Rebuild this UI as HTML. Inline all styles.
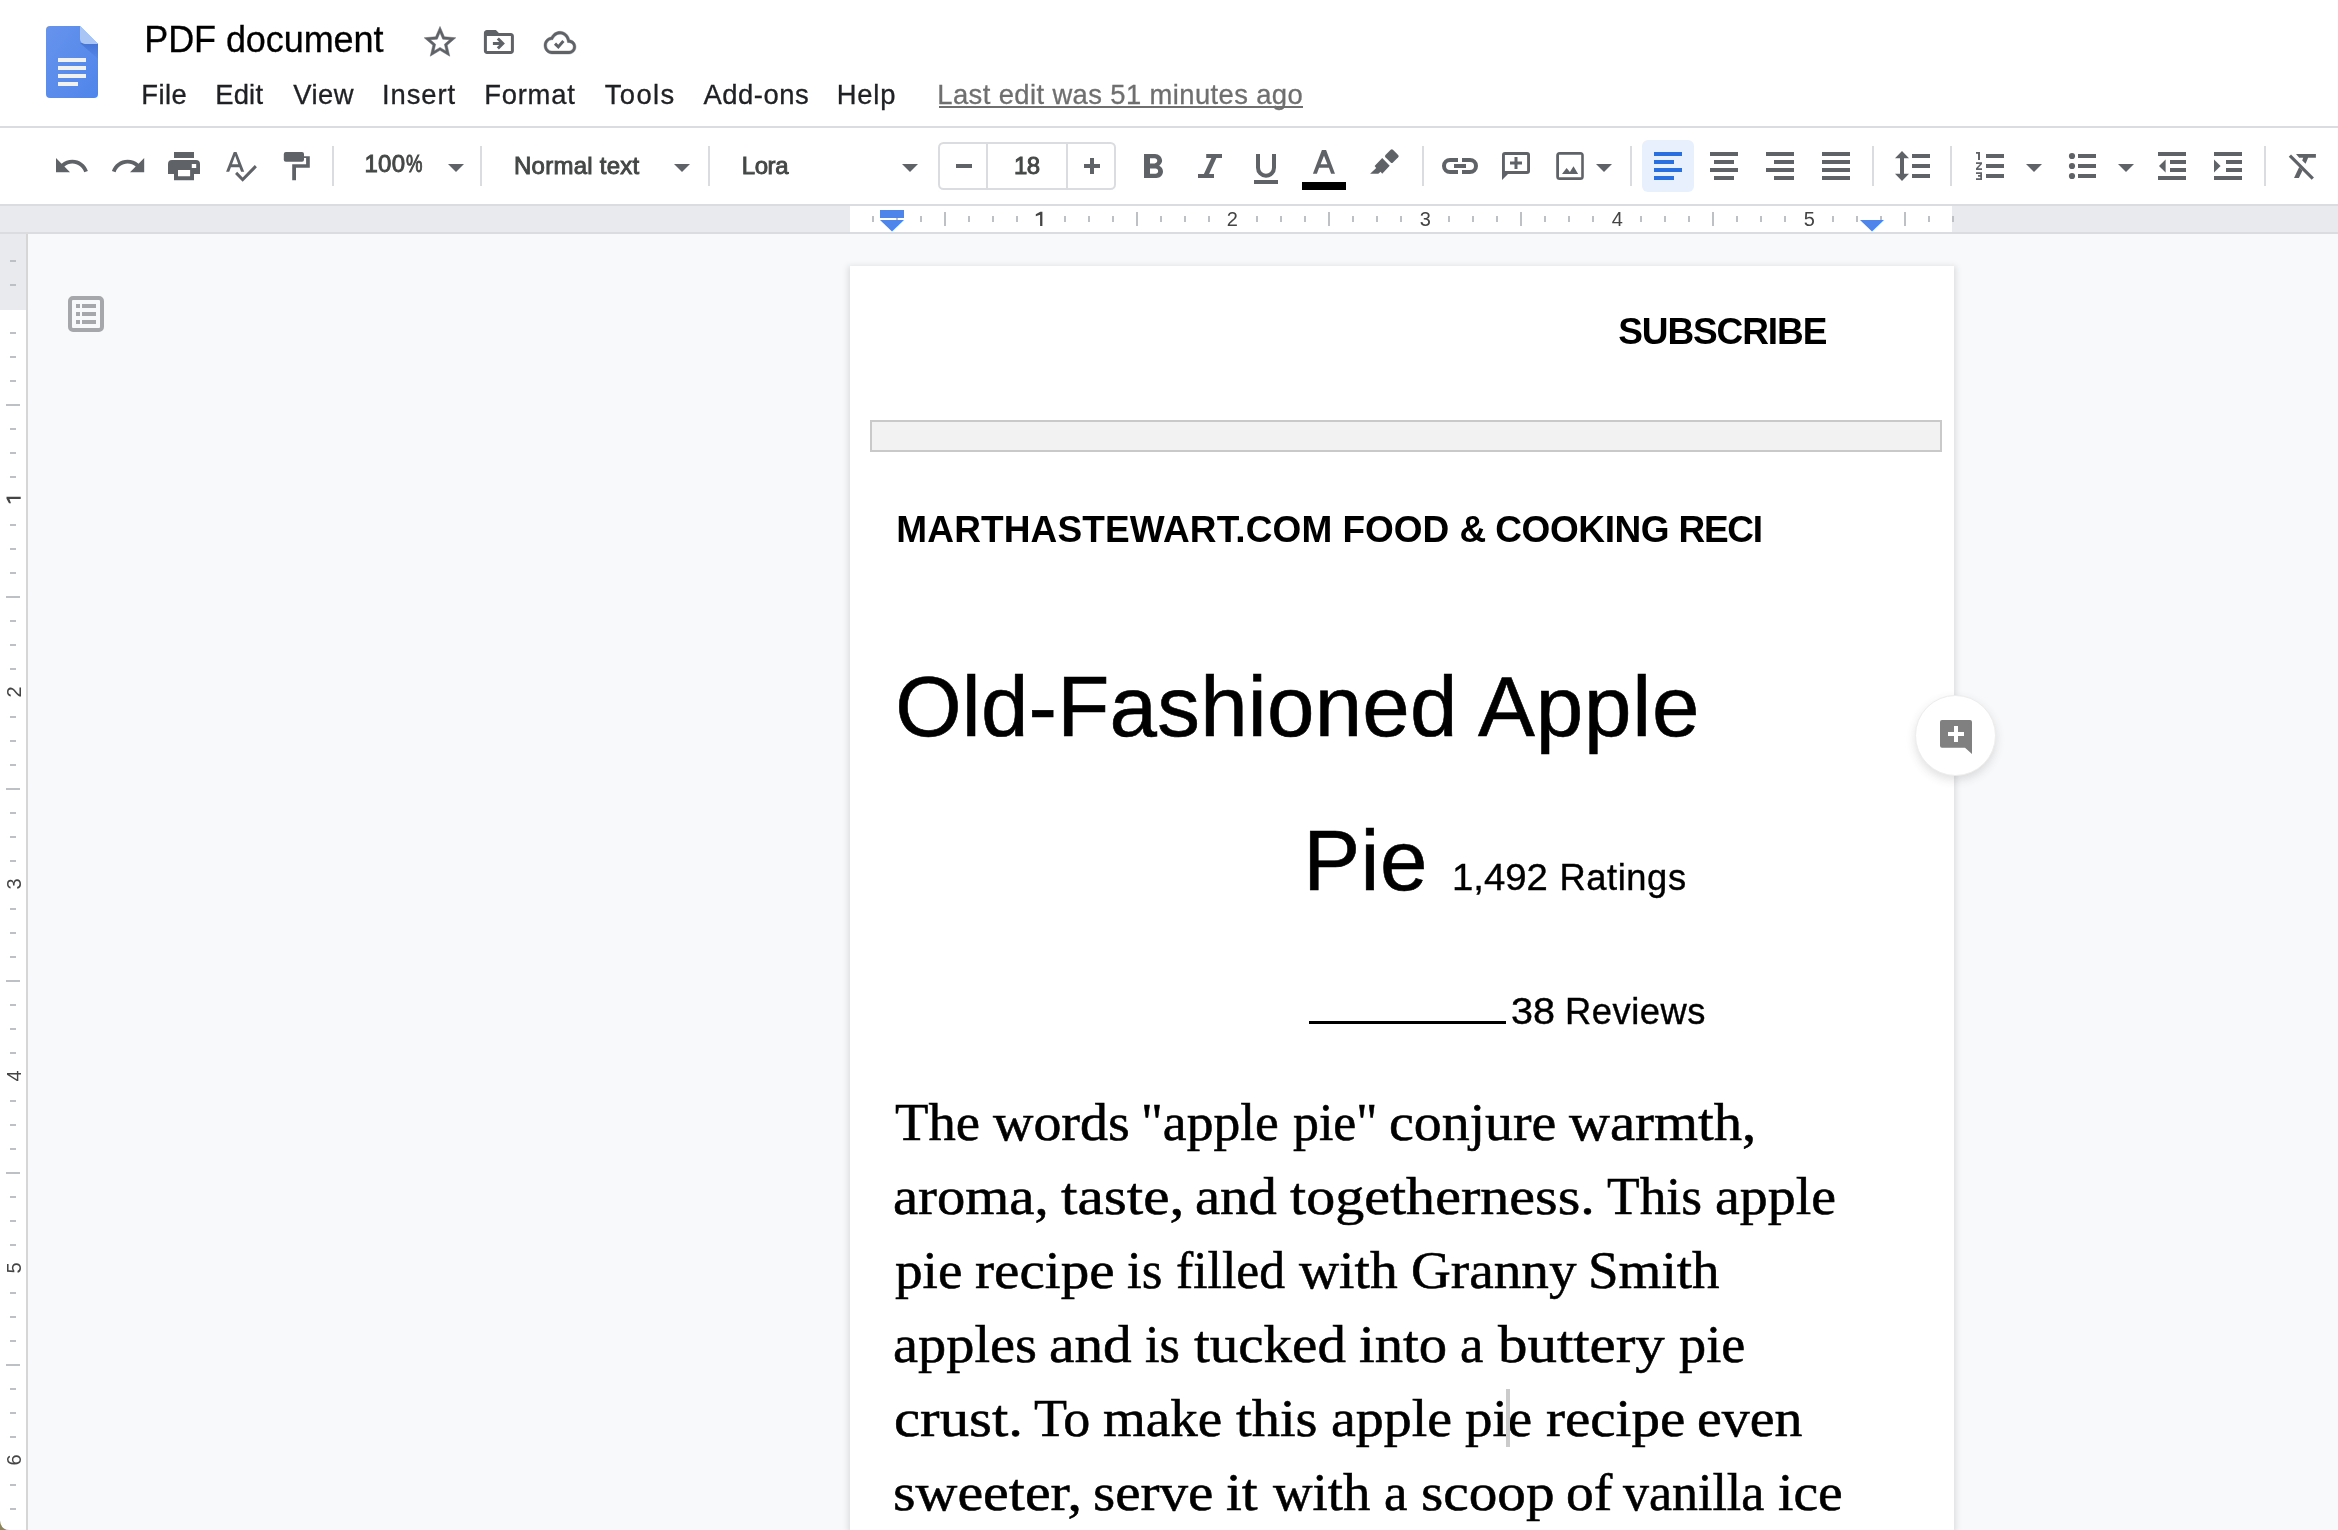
<!DOCTYPE html>
<html lang="en"><head><meta charset="utf-8"><title>PDF document - Google Docs</title>
<style>
html,body{margin:0;padding:0;width:2338px;height:1530px;overflow:hidden}
body{width:2338px;height:1530px;overflow:hidden;position:relative;background:#f8f9fa;font-family:"Liberation Sans",sans-serif}
.a{position:absolute}
.t{position:absolute;white-space:pre;line-height:1}
.vr{font:400 20px/1 "Liberation Sans",sans-serif;color:#444;transform:translate(-50%,-50%) rotate(-90deg)}
#titlebar{left:0;top:0;width:2338px;height:126px;background:#fff;border-bottom:2px solid #dadce0}
#toolbar{left:0;top:128px;width:2338px;height:76px;background:#fff;border-bottom:2px solid #dadce0}
#hruler{left:0;top:206px;width:2338px;height:26px;background:#e8eaed;border-bottom:2px solid #dadce0}
#hruler i{position:absolute;left:850px;top:0;width:1102px;height:26px;background:#fff}
#vruler{left:0;top:234px;width:26px;height:1296px;background:#fff;border-right:2px solid #d6d6d6}
#vruler i{position:absolute;left:0;top:0;width:26px;height:76px;background:#e8eaed}
#page{left:850px;top:266px;width:1104px;height:1264px;background:#fff;box-shadow:0 2px 6px 2px rgba(60,64,67,.15)}
#hr{left:870px;top:420px;width:1068px;height:28px;background:#f2f2f2;border:2px solid #c9c9c9}
#ul{left:1309px;top:1020.5px;width:197px;height:3px;background:#000}
#cur{left:1506px;top:1389px;width:4px;height:58px;background:#cbcbcb}
#le{left:939px;top:106px;width:363.5px;height:2px;background:#6f6f6f}
#fab{left:1915.3px;top:695px;width:81px;height:81px;box-sizing:border-box;border-radius:50%;background:#fff;border:1.5px solid #ededed;box-shadow:0 4px 10px rgba(60,64,67,.16)}
svg{position:absolute;left:0;top:0}
#txt{position:absolute;left:0;top:0;width:2338px;height:1530px;will-change:transform}
</style></head>
<body>
<div class="a" id="titlebar"></div>
<div class="a" id="toolbar"></div>
<div class="a" id="hruler"><i></i></div>
<div class="a" id="vruler"><i></i></div>
<div class="a" id="page"></div>
<div class="a" id="hr"></div>
<div class="a" id="ul"></div>
<div class="a" id="le"></div>
<div class="a" id="fab"></div>
<div id="txt">
<span class="t" style="left:144.20px;top:21.80px;font:normal 400 36px/1 'Liberation Sans';color:#000;letter-spacing:-0.073px;-webkit-text-stroke:.3px #000;">PDF document</span>
<span class="t" style="left:141.30px;top:80.90px;font:normal 400 27.4px/1 'Liberation Sans';color:#202124;letter-spacing:0.433px;-webkit-text-stroke:.3px #202124;">File</span>
<span class="t" style="left:215.20px;top:80.90px;font:normal 400 27.4px/1 'Liberation Sans';color:#202124;letter-spacing:0.204px;-webkit-text-stroke:.3px #202124;">Edit</span>
<span class="t" style="left:293.20px;top:80.90px;font:normal 400 27.4px/1 'Liberation Sans';color:#202124;letter-spacing:0.502px;-webkit-text-stroke:.3px #202124;">View</span>
<span class="t" style="left:382.00px;top:80.90px;font:normal 400 27.4px/1 'Liberation Sans';color:#202124;letter-spacing:0.901px;-webkit-text-stroke:.3px #202124;">Insert</span>
<span class="t" style="left:484.20px;top:80.90px;font:normal 400 27.4px/1 'Liberation Sans';color:#202124;letter-spacing:0.773px;-webkit-text-stroke:.3px #202124;">Format</span>
<span class="t" style="left:604.70px;top:80.90px;font:normal 400 27.4px/1 'Liberation Sans';color:#202124;letter-spacing:1.388px;-webkit-text-stroke:.3px #202124;">Tools</span>
<span class="t" style="left:703.50px;top:80.90px;font:normal 400 27.4px/1 'Liberation Sans';color:#202124;letter-spacing:0.529px;-webkit-text-stroke:.3px #202124;">Add-ons</span>
<span class="t" style="left:836.70px;top:80.90px;font:normal 400 27.4px/1 'Liberation Sans';color:#202124;letter-spacing:0.834px;-webkit-text-stroke:.3px #202124;">Help</span>
<span class="t" style="left:937.30px;top:80.90px;font:normal 400 27.4px/1 'Liberation Sans';color:#6f6f6f;letter-spacing:0.395px;-webkit-text-stroke:.3px #6f6f6f;">Last edit was 51 minutes ago</span>
<span class="t" style="left:364.40px;top:151.90px;font:normal 400 24px/1 'Liberation Sans';color:#444746;letter-spacing:0.302px;-webkit-text-stroke:.9px #444746;">100</span>
<span class="t" style="left:405.80px;top:151.90px;font:normal 400 24px/1 'Liberation Sans';color:#444746;transform:scaleX(0.7714);transform-origin:0 0;-webkit-text-stroke:.9px #444746;">%</span>
<span class="t" style="left:514.00px;top:154.00px;font:normal 400 24px/1 'Liberation Sans';color:#444746;letter-spacing:0.257px;-webkit-text-stroke:.9px #444746;">Normal text</span>
<span class="t" style="left:741.70px;top:154.00px;font:normal 400 24px/1 'Liberation Sans';color:#444746;letter-spacing:-0.396px;-webkit-text-stroke:.9px #444746;">Lora</span>
<span class="t" style="left:1013.90px;top:154.00px;font:normal 400 24px/1 'Liberation Sans';color:#444746;letter-spacing:-0.548px;-webkit-text-stroke:.9px #444746;">18</span>
<span class="t" style="left:1226.80px;top:209.00px;font:normal 400 20px/1 'Liberation Sans';color:#444;">2</span>
<span class="t" style="left:1419.80px;top:209.00px;font:normal 400 20px/1 'Liberation Sans';color:#444;">3</span>
<span class="t" style="left:1611.80px;top:209.00px;font:normal 400 20px/1 'Liberation Sans';color:#444;">4</span>
<span class="t" style="left:1803.80px;top:209.00px;font:normal 400 20px/1 'Liberation Sans';color:#444;">5</span>
<span class="t" style="left:1618.20px;top:313.00px;font:normal 700 37px/1 'Liberation Sans';color:#000;letter-spacing:-1.092px;">SUBSCRIBE</span>
<span class="t" style="left:896.30px;top:511.00px;font:normal 700 37px/1 'Liberation Sans';color:#000;letter-spacing:0.146px;">MARTHASTEWART.COM</span>
<span class="t" style="left:1342.40px;top:511.00px;font:normal 700 37px/1 'Liberation Sans';color:#000;letter-spacing:0.013px;">FOOD</span>
<span class="t" style="left:1459.40px;top:511.00px;font:normal 700 37px/1 'Liberation Sans';color:#000;">&amp;</span>
<span class="t" style="left:1495.30px;top:511.00px;font:normal 700 37px/1 'Liberation Sans';color:#000;letter-spacing:-0.417px;">COOKING</span>
<span class="t" style="left:1678.60px;top:511.00px;font:normal 700 37px/1 'Liberation Sans';color:#000;letter-spacing:-1.340px;">RECI</span>
<span class="t" style="left:895.20px;top:663.60px;font:normal 400 85.33px/1 'Liberation Sans';color:#000;letter-spacing:0.215px;-webkit-text-stroke:.6px #000;">Old-Fashioned</span>
<span class="t" style="left:1478.00px;top:663.60px;font:normal 400 85.33px/1 'Liberation Sans';color:#000;letter-spacing:0.805px;-webkit-text-stroke:.6px #000;">Apple</span>
<span class="t" style="left:1303.20px;top:817.90px;font:normal 400 85.33px/1 'Liberation Sans';color:#000;letter-spacing:0.515px;-webkit-text-stroke:.6px #000;">Pie</span>
<span class="t" style="left:1452.49px;top:859.90px;font:normal 400 36.3px/1 'Liberation Sans';color:#000;transform:scaleX(1.0543);transform-origin:0 0;-webkit-text-stroke:.4px #000;">1,492</span>
<span class="t" style="left:1559.40px;top:859.90px;font:normal 400 36.3px/1 'Liberation Sans';color:#000;letter-spacing:0.597px;-webkit-text-stroke:.4px #000;">Ratings</span>
<span class="t" style="left:1510.61px;top:993.50px;font:normal 400 36.3px/1 'Liberation Sans';color:#000;transform:scaleX(1.0894);transform-origin:0 0;-webkit-text-stroke:.4px #000;">38</span>
<span class="t" style="left:1565.10px;top:993.50px;font:normal 400 36.3px/1 'Liberation Sans';color:#000;letter-spacing:0.515px;-webkit-text-stroke:.4px #000;">Reviews</span>
<span class="t" style="left:894.50px;top:1097.00px;font:normal 400 52px/1 'Liberation Serif';color:#000;transform:scaleX(1.0519);transform-origin:0 0;-webkit-text-stroke:.55px #000;">The</span>
<span class="t" style="left:992.70px;top:1097.00px;font:normal 400 52px/1 'Liberation Serif';color:#000;transform:scaleX(1.0757);transform-origin:0 0;-webkit-text-stroke:.55px #000;">words</span>
<span class="t" style="left:1141.01px;top:1097.00px;font:normal 400 52px/1 'Liberation Serif';color:#000;transform:scaleX(1.0304);transform-origin:0 0;-webkit-text-stroke:.55px #000;">&quot;apple</span>
<span class="t" style="left:1292.70px;top:1097.00px;font:normal 400 52px/1 'Liberation Serif';color:#000;transform:scaleX(0.9972);transform-origin:0 0;-webkit-text-stroke:.55px #000;">pie&quot;</span>
<span class="t" style="left:1388.83px;top:1097.00px;font:normal 400 52px/1 'Liberation Serif';color:#000;transform:scaleX(1.0732);transform-origin:0 0;-webkit-text-stroke:.55px #000;">conjure</span>
<span class="t" style="left:1569.20px;top:1097.00px;font:normal 400 52px/1 'Liberation Serif';color:#000;transform:scaleX(1.0892);transform-origin:0 0;-webkit-text-stroke:.55px #000;">warmth,</span>
<span class="t" style="left:893.41px;top:1171.00px;font:normal 400 52px/1 'Liberation Serif';color:#000;transform:scaleX(1.0884);transform-origin:0 0;-webkit-text-stroke:.55px #000;">aroma,</span>
<span class="t" style="left:1060.70px;top:1171.00px;font:normal 400 52px/1 'Liberation Serif';color:#000;transform:scaleX(1.1378);transform-origin:0 0;-webkit-text-stroke:.55px #000;">taste,</span>
<span class="t" style="left:1195.01px;top:1171.00px;font:normal 400 52px/1 'Liberation Serif';color:#000;transform:scaleX(1.0880);transform-origin:0 0;-webkit-text-stroke:.55px #000;">and</span>
<span class="t" style="left:1290.20px;top:1171.00px;font:normal 400 52px/1 'Liberation Serif';color:#000;transform:scaleX(1.1166);transform-origin:0 0;-webkit-text-stroke:.55px #000;">togetherness.</span>
<span class="t" style="left:1607.00px;top:1171.00px;font:normal 400 52px/1 'Liberation Serif';color:#000;transform:scaleX(1.0273);transform-origin:0 0;-webkit-text-stroke:.55px #000;">This</span>
<span class="t" style="left:1714.53px;top:1171.00px;font:normal 400 52px/1 'Liberation Serif';color:#000;transform:scaleX(1.0739);transform-origin:0 0;-webkit-text-stroke:.55px #000;">apple</span>
<span class="t" style="left:894.50px;top:1245.00px;font:normal 400 52px/1 'Liberation Serif';color:#000;transform:scaleX(1.0617);transform-origin:0 0;-webkit-text-stroke:.55px #000;">pie</span>
<span class="t" style="left:974.70px;top:1245.00px;font:normal 400 52px/1 'Liberation Serif';color:#000;transform:scaleX(1.0991);transform-origin:0 0;-webkit-text-stroke:.55px #000;">recipe</span>
<span class="t" style="left:1127.08px;top:1245.00px;font:normal 400 52px/1 'Liberation Serif';color:#000;transform:scaleX(1.0201);transform-origin:0 0;-webkit-text-stroke:.55px #000;">is</span>
<span class="t" style="left:1175.81px;top:1245.00px;font:normal 400 52px/1 'Liberation Serif';color:#000;transform:scaleX(0.9932);transform-origin:0 0;-webkit-text-stroke:.55px #000;">filled</span>
<span class="t" style="left:1298.70px;top:1245.00px;font:normal 400 52px/1 'Liberation Serif';color:#000;transform:scaleX(1.0676);transform-origin:0 0;-webkit-text-stroke:.55px #000;">with</span>
<span class="t" style="left:1410.88px;top:1245.00px;font:normal 400 52px/1 'Liberation Serif';color:#000;transform:scaleX(1.0614);transform-origin:0 0;-webkit-text-stroke:.55px #000;">Granny</span>
<span class="t" style="left:1587.83px;top:1245.00px;font:normal 400 52px/1 'Liberation Serif';color:#000;transform:scaleX(1.0580);transform-origin:0 0;-webkit-text-stroke:.55px #000;">Smith</span>
<span class="t" style="left:893.42px;top:1319.00px;font:normal 400 52px/1 'Liberation Serif';color:#000;transform:scaleX(1.0842);transform-origin:0 0;-webkit-text-stroke:.55px #000;">apples</span>
<span class="t" style="left:1049.30px;top:1319.00px;font:normal 400 52px/1 'Liberation Serif';color:#000;transform:scaleX(1.1002);transform-origin:0 0;-webkit-text-stroke:.55px #000;">and</span>
<span class="t" style="left:1145.29px;top:1319.00px;font:normal 400 52px/1 'Liberation Serif';color:#000;transform:scaleX(1.0078);transform-origin:0 0;-webkit-text-stroke:.55px #000;">is</span>
<span class="t" style="left:1193.90px;top:1319.00px;font:normal 400 52px/1 'Liberation Serif';color:#000;transform:scaleX(1.0959);transform-origin:0 0;-webkit-text-stroke:.55px #000;">tucked</span>
<span class="t" style="left:1359.41px;top:1319.00px;font:normal 400 52px/1 'Liberation Serif';color:#000;transform:scaleX(1.0901);transform-origin:0 0;-webkit-text-stroke:.55px #000;">into</span>
<span class="t" style="left:1460.49px;top:1319.00px;font:normal 400 52px/1 'Liberation Serif';color:#000;transform:scaleX(1.0091);transform-origin:0 0;-webkit-text-stroke:.55px #000;">a</span>
<span class="t" style="left:1498.30px;top:1319.00px;font:normal 400 52px/1 'Liberation Serif';color:#000;transform:scaleX(1.1325);transform-origin:0 0;-webkit-text-stroke:.55px #000;">buttery</span>
<span class="t" style="left:1679.00px;top:1319.00px;font:normal 400 52px/1 'Liberation Serif';color:#000;transform:scaleX(1.0441);transform-origin:0 0;-webkit-text-stroke:.55px #000;">pie</span>
<span class="t" style="left:893.87px;top:1393.00px;font:normal 400 52px/1 'Liberation Serif';color:#000;transform:scaleX(1.1301);transform-origin:0 0;-webkit-text-stroke:.55px #000;">crust.</span>
<span class="t" style="left:1034.40px;top:1393.00px;font:normal 400 52px/1 'Liberation Serif';color:#000;transform:scaleX(1.0389);transform-origin:0 0;-webkit-text-stroke:.55px #000;">To</span>
<span class="t" style="left:1103.04px;top:1393.00px;font:normal 400 52px/1 'Liberation Serif';color:#000;transform:scaleX(1.0586);transform-origin:0 0;-webkit-text-stroke:.55px #000;">make</span>
<span class="t" style="left:1236.10px;top:1393.00px;font:normal 400 52px/1 'Liberation Serif';color:#000;transform:scaleX(1.0853);transform-origin:0 0;-webkit-text-stroke:.55px #000;">this</span>
<span class="t" style="left:1330.73px;top:1393.00px;font:normal 400 52px/1 'Liberation Serif';color:#000;transform:scaleX(1.0739);transform-origin:0 0;-webkit-text-stroke:.55px #000;">apple</span>
<span class="t" style="left:1465.40px;top:1393.00px;font:normal 400 52px/1 'Liberation Serif';color:#000;transform:scaleX(1.0553);transform-origin:0 0;-webkit-text-stroke:.55px #000;">pie</span>
<span class="t" style="left:1545.60px;top:1393.00px;font:normal 400 52px/1 'Liberation Serif';color:#000;transform:scaleX(1.0959);transform-origin:0 0;-webkit-text-stroke:.55px #000;">recipe</span>
<span class="t" style="left:1696.85px;top:1393.00px;font:normal 400 52px/1 'Liberation Serif';color:#000;transform:scaleX(1.0732);transform-origin:0 0;-webkit-text-stroke:.55px #000;">even</span>
<span class="t" style="left:893.17px;top:1467.00px;font:normal 400 52px/1 'Liberation Serif';color:#000;transform:scaleX(1.1141);transform-origin:0 0;-webkit-text-stroke:.55px #000;">sweeter,</span>
<span class="t" style="left:1092.71px;top:1467.00px;font:normal 400 52px/1 'Liberation Serif';color:#000;transform:scaleX(1.0972);transform-origin:0 0;-webkit-text-stroke:.55px #000;">serve</span>
<span class="t" style="left:1225.80px;top:1467.00px;font:normal 400 52px/1 'Liberation Serif';color:#000;transform:scaleX(1.0968);transform-origin:0 0;-webkit-text-stroke:.55px #000;">it</span>
<span class="t" style="left:1273.10px;top:1467.00px;font:normal 400 52px/1 'Liberation Serif';color:#000;transform:scaleX(1.0525);transform-origin:0 0;-webkit-text-stroke:.55px #000;">with</span>
<span class="t" style="left:1384.19px;top:1467.00px;font:normal 400 52px/1 'Liberation Serif';color:#000;transform:scaleX(1.0136);transform-origin:0 0;-webkit-text-stroke:.55px #000;">a</span>
<span class="t" style="left:1420.50px;top:1467.00px;font:normal 400 52px/1 'Liberation Serif';color:#000;transform:scaleX(1.1004);transform-origin:0 0;-webkit-text-stroke:.55px #000;">scoop</span>
<span class="t" style="left:1565.93px;top:1467.00px;font:normal 400 52px/1 'Liberation Serif';color:#000;transform:scaleX(1.0698);transform-origin:0 0;-webkit-text-stroke:.55px #000;">of</span>
<span class="t" style="left:1622.60px;top:1467.00px;font:normal 400 52px/1 'Liberation Serif';color:#000;transform:scaleX(0.9984);transform-origin:0 0;-webkit-text-stroke:.55px #000;">vanilla</span>
<span class="t" style="left:1777.63px;top:1467.00px;font:normal 400 52px/1 'Liberation Serif';color:#000;transform:scaleX(1.0679);transform-origin:0 0;-webkit-text-stroke:.55px #000;">ice</span>
<span class="t vr" style="left:14px;top:692.0px;">2</span>
<span class="t vr" style="left:14px;top:884.0px;">3</span>
<span class="t vr" style="left:14px;top:1076.0px;">4</span>
<span class="t vr" style="left:14px;top:1268.0px;">5</span>
<span class="t vr" style="left:14px;top:1460.0px;">6</span>
</div>
<div class="a" id="cur"></div>
<svg width="2338" height="1530" viewBox="0 0 2338 1530">
<defs><linearGradient id="dg" x1="0" y1="0" x2="1" y2="1"><stop offset="0" stop-color="#6693ed"/><stop offset="1" stop-color="#4f85ea"/></linearGradient><linearGradient id="fs" x1="0" y1="0" x2="0" y2="1"><stop offset="0" stop-color="#3c6acb" stop-opacity=".7"/><stop offset="1" stop-color="#3c6acb" stop-opacity=".05"/></linearGradient></defs><path d="M50 26H80L98 44V94a4 4 0 0 1-4 4H50a4 4 0 0 1-4-4V30a4 4 0 0 1 4-4z" fill="url(#dg)" /><path d="M80 43L98 43.500V59z" fill="url(#fs)" /><path d="M80 26L98 44H85a5 5 0 0 1-5-5z" fill="#a9c5f6" /><rect x="58" y="58" width="28" height="4" fill="#f1f1f1" /><rect x="58" y="66" width="28" height="4" fill="#f1f1f1" /><rect x="58" y="74" width="28" height="4" fill="#f1f1f1" /><rect x="58" y="82" width="20" height="4" fill="#f1f1f1" /><polyline points="555,43.600 558.300,46.900 563.400,41" fill="none" stroke="#5f6368" stroke-width="3"/><rect x="174" y="152" width="20" height="6" fill="#5f6368" /><path d="M172 160h24a4 4 0 0 1 4 4v10h-6v-4.5h-20v4.5h-6v-10a4 4 0 0 1 4-4zM191.8 163.9v4.2h4.4v-4.2z" fill="#5f6368" fill-rule="evenodd"/><path d="M174 168h20v12.2h-20zM178 170v6.3h12.1v-6.3z" fill="#5f6368" fill-rule="evenodd"/><rect x="283.8" y="151.9" width="20.2" height="9.8" fill="#5f6368" rx="2" /><path d="M304 156.2h5.800v11.500h-13.800v12.500h-3.800v-15.900h13.900v-6.400h-2.100z" fill="#5f6368" /><rect x="332" y="146" width="2" height="40" fill="#dadce0" /><rect x="480" y="146" width="2" height="40" fill="#dadce0" /><rect x="708" y="146" width="2" height="40" fill="#dadce0" /><rect x="1422" y="146" width="2" height="40" fill="#dadce0" /><rect x="1630" y="146" width="2" height="40" fill="#dadce0" /><rect x="1872" y="146" width="2" height="40" fill="#dadce0" /><rect x="1950" y="146" width="2" height="40" fill="#dadce0" /><rect x="2264" y="146" width="2" height="40" fill="#dadce0" /><polygon points="448,164 464,164 456.0,172" fill="#5f6368"/><polygon points="674,164 690,164 682.0,172" fill="#5f6368"/><polygon points="902,164 918,164 910.0,172" fill="#5f6368"/><polygon points="1596,164 1612,164 1604.0,172" fill="#5f6368"/><polygon points="2026,164 2042,164 2034.0,172" fill="#5f6368"/><polygon points="2118,164 2134,164 2126.0,172" fill="#5f6368"/><rect x="939" y="143" width="176" height="46" rx="4.500" fill="none" stroke="#dadce0" stroke-width="2"/><rect x="986" y="144" width="2" height="44" fill="#dadce0" /><rect x="1066" y="144" width="2" height="44" fill="#dadce0" /><rect x="956" y="164" width="16" height="4" fill="#5f6368" /><rect x="1084" y="164" width="16" height="4" fill="#5f6368" /><rect x="1090" y="158" width="4" height="16" fill="#5f6368" /><path d="M1206.2 154H1222v4.100h-5.600L1209.100 174h4.900v4H1198v-4h5.900L1211.400 158.100h-5.200z" fill="#5f6368" /><path d="M1256 154h4v13.700a6 6 0 0 0 12 0V154h4v13.700a10 10 0 0 1-20 0z" fill="#5f6368" /><rect x="1254" y="180" width="24" height="4" fill="#5f6368" /><path d="M1321.900 150.100H1326.100L1335 173.800H1331.100L1328.900 167.800H1319.100L1316.900 173.800H1312.900ZM1324 155.700L1327.400 164.200H1320.600Z" fill="#5f6368" fill-rule="evenodd"/><rect x="1302" y="182" width="44" height="8" fill="#000" /><rect x="-5.3" y="-5.3" width="10.6" height="10.6" rx="1.6" fill="#5f6368" transform="translate(1391.8 156.1) rotate(45)"/><path d="M1382.2 158.100L1389.7 165.800L1382.2 173.800L1380.6 171.800L1378.3 173.800H1370.100L1376.2 167.900L1374.6 166.100z" fill="#5f6368" /><path d="M1458 160H1450a6 6 0 0 0 0 12H1458M1462 160H1470a6 6 0 0 1 0 12H1462" fill="none" stroke="#5f6368" stroke-width="4"/><rect x="1454" y="164" width="12" height="4" fill="#5f6368" /><path d="M1505 152h22a3 3 0 0 1 3 3v16a3 3 0 0 1-3 3h-19l-6 6v-25a3 3 0 0 1 3-3zM1504.900 154.900v16.200h22.200v-16.200z" fill="#5f6368" fill-rule="evenodd"/><rect x="1510" y="161.5" width="12" height="3" fill="#5f6368" /><rect x="1514.5" y="157" width="3" height="12" fill="#5f6368" /><path d="M1559.700 152h20.600a3.500 3.500 0 0 1 3.500 3.500v21a3.500 3.500 0 0 1-3.500 3.500h-20.600a3.500 3.500 0 0 1-3.500-3.500v-21a3.500 3.500 0 0 1 3.500-3.500zM1559 154.800v22.400h22.200v-22.400z" fill="#5f6368" fill-rule="evenodd"/><path d="M1562 174l4.600-6 3.300 4 3.600-5.800 4.600 7.800z" fill="#5f6368" /><rect x="1642" y="140" width="52" height="52" fill="#e8f0fe" rx="6" /><rect x="1654" y="152" width="28" height="4" fill="#2a6fe0" /><rect x="1654" y="160" width="20" height="4" fill="#2a6fe0" /><rect x="1654" y="168" width="28" height="4" fill="#2a6fe0" /><rect x="1654" y="176" width="20" height="4" fill="#2a6fe0" /><rect x="1710" y="152" width="28" height="4" fill="#5f6368" /><rect x="1714" y="160" width="20" height="4" fill="#5f6368" /><rect x="1710" y="168" width="28" height="4" fill="#5f6368" /><rect x="1714" y="176" width="20" height="4" fill="#5f6368" /><rect x="1766" y="152" width="28" height="4" fill="#5f6368" /><rect x="1774" y="160" width="20" height="4" fill="#5f6368" /><rect x="1766" y="168" width="28" height="4" fill="#5f6368" /><rect x="1774" y="176" width="20" height="4" fill="#5f6368" /><rect x="1822" y="152" width="28" height="4" fill="#5f6368" /><rect x="1822" y="160" width="28" height="4" fill="#5f6368" /><rect x="1822" y="168" width="28" height="4" fill="#5f6368" /><rect x="1822" y="176" width="28" height="4" fill="#5f6368" /><path d="M1902 151l7 7.200h-5v15.600h5l-7 7.200-7-7.200h5v-15.600h-5z" fill="#5f6368" /><rect x="1912" y="154" width="18" height="4" fill="#5f6368" /><rect x="1912" y="164" width="18" height="4" fill="#5f6368" /><rect x="1912" y="174" width="18" height="4" fill="#5f6368" /><rect x="1986" y="154" width="18" height="4" fill="#5f6368" /><rect x="1986" y="164" width="18" height="4" fill="#5f6368" /><rect x="1986" y="174" width="18" height="4" fill="#5f6368" /><rect x="1976" y="152" width="4" height="1.8" fill="#5f6368" /><rect x="1978" y="152" width="2" height="8" fill="#5f6368" /><path d="M1976 162.200h6v1.700l-4 4.400h4v1.700h-6v-1.700l4-4.400h-4z" fill="#5f6368" /><path d="M1976 172.200h6v7.700h-6v-1.700h4.300v-1.400h-2.300v-1.700h2.300v-1.200h-4.300z" fill="#5f6368" /><rect x="2078" y="154" width="18" height="4" fill="#5f6368" /><circle cx="2072" cy="156" r="3.1" fill="#5f6368"/><rect x="2078" y="164" width="18" height="4" fill="#5f6368" /><circle cx="2072" cy="166" r="3.1" fill="#5f6368"/><rect x="2078" y="174" width="18" height="4" fill="#5f6368" /><circle cx="2072" cy="176" r="3.1" fill="#5f6368"/><rect x="2158" y="152" width="28" height="4" fill="#5f6368" /><rect x="2158" y="176" width="28" height="4" fill="#5f6368" /><rect x="2170" y="160" width="16" height="4" fill="#5f6368" /><rect x="2170" y="168" width="16" height="4" fill="#5f6368" /><rect x="2214" y="152" width="28" height="4" fill="#5f6368" /><rect x="2214" y="176" width="28" height="4" fill="#5f6368" /><rect x="2226" y="160" width="16" height="4" fill="#5f6368" /><rect x="2226" y="168" width="16" height="4" fill="#5f6368" /><polygon points="2165.600,159.400 2165.600,172.600 2159,166" fill="#5f6368"/><polygon points="2214,159.400 2214,172.600 2220.600,166" fill="#5f6368"/><line x1="2289.900" y1="155.700" x2="2312.800" y2="178.700" stroke="#5f6368" stroke-width="3.200"/><path d="M2296 154h19.900v3.800h-7.800l-2.500 5.900-3.400-3.300 1-2.600h-4z" fill="#5f6368" /><path d="M2299.200 167.100l3.300 3.300-3.600 7.500h-4.900z" fill="#5f6368" /><rect x="872" y="216" width="2" height="6" fill="#bdc1c6" /><rect x="896" y="216" width="2" height="6" fill="#bdc1c6" /><rect x="920" y="216" width="2" height="6" fill="#bdc1c6" /><rect x="944" y="212" width="2" height="14" fill="#bdc1c6" /><rect x="968" y="216" width="2" height="6" fill="#bdc1c6" /><rect x="992" y="216" width="2" height="6" fill="#bdc1c6" /><rect x="1016" y="216" width="2" height="6" fill="#bdc1c6" /><rect x="1064" y="216" width="2" height="6" fill="#bdc1c6" /><rect x="1088" y="216" width="2" height="6" fill="#bdc1c6" /><rect x="1112" y="216" width="2" height="6" fill="#bdc1c6" /><rect x="1136" y="212" width="2" height="14" fill="#bdc1c6" /><rect x="1160" y="216" width="2" height="6" fill="#bdc1c6" /><rect x="1184" y="216" width="2" height="6" fill="#bdc1c6" /><rect x="1208" y="216" width="2" height="6" fill="#bdc1c6" /><rect x="1256" y="216" width="2" height="6" fill="#bdc1c6" /><rect x="1280" y="216" width="2" height="6" fill="#bdc1c6" /><rect x="1304" y="216" width="2" height="6" fill="#bdc1c6" /><rect x="1328" y="212" width="2" height="14" fill="#bdc1c6" /><rect x="1352" y="216" width="2" height="6" fill="#bdc1c6" /><rect x="1376" y="216" width="2" height="6" fill="#bdc1c6" /><rect x="1400" y="216" width="2" height="6" fill="#bdc1c6" /><rect x="1448" y="216" width="2" height="6" fill="#bdc1c6" /><rect x="1472" y="216" width="2" height="6" fill="#bdc1c6" /><rect x="1496" y="216" width="2" height="6" fill="#bdc1c6" /><rect x="1520" y="212" width="2" height="14" fill="#bdc1c6" /><rect x="1544" y="216" width="2" height="6" fill="#bdc1c6" /><rect x="1568" y="216" width="2" height="6" fill="#bdc1c6" /><rect x="1592" y="216" width="2" height="6" fill="#bdc1c6" /><rect x="1640" y="216" width="2" height="6" fill="#bdc1c6" /><rect x="1664" y="216" width="2" height="6" fill="#bdc1c6" /><rect x="1688" y="216" width="2" height="6" fill="#bdc1c6" /><rect x="1712" y="212" width="2" height="14" fill="#bdc1c6" /><rect x="1736" y="216" width="2" height="6" fill="#bdc1c6" /><rect x="1760" y="216" width="2" height="6" fill="#bdc1c6" /><rect x="1784" y="216" width="2" height="6" fill="#bdc1c6" /><rect x="1832" y="216" width="2" height="6" fill="#bdc1c6" /><rect x="1856" y="216" width="2" height="6" fill="#bdc1c6" /><rect x="1880" y="216" width="2" height="6" fill="#bdc1c6" /><rect x="1904" y="212" width="2" height="14" fill="#bdc1c6" /><rect x="1928" y="216" width="2" height="6" fill="#bdc1c6" /><rect x="1952" y="216" width="2" height="6" fill="#bdc1c6" /><path d="M1040.300 211.800H1042.400V226H1040.100V214.700L1035.800 216.300V214.300Z" fill="#444" /><path d="M1040.300 211.800H1042.400V226H1040.100V214.700L1035.800 216.300V214.300Z" fill="#444" transform="translate(13.600 500) rotate(-90) translate(-1039.100 -218.900)"/><rect x="880" y="210" width="24" height="8" fill="#4d85ea" /><polygon points="880,220 904,220 892,231.500" fill="#4d85ea"/><polygon points="1860,220 1884,220 1872,231.500" fill="#4d85ea"/><rect x="10" y="260" width="6" height="2" fill="#bdc1c6" /><rect x="10" y="284" width="6" height="2" fill="#bdc1c6" /><rect x="10" y="332" width="6" height="2" fill="#bdc1c6" /><rect x="10" y="356" width="6" height="2" fill="#bdc1c6" /><rect x="10" y="380" width="6" height="2" fill="#bdc1c6" /><rect x="6" y="404" width="14" height="2" fill="#bdc1c6" /><rect x="10" y="428" width="6" height="2" fill="#bdc1c6" /><rect x="10" y="452" width="6" height="2" fill="#bdc1c6" /><rect x="10" y="476" width="6" height="2" fill="#bdc1c6" /><rect x="10" y="524" width="6" height="2" fill="#bdc1c6" /><rect x="10" y="548" width="6" height="2" fill="#bdc1c6" /><rect x="10" y="572" width="6" height="2" fill="#bdc1c6" /><rect x="6" y="596" width="14" height="2" fill="#bdc1c6" /><rect x="10" y="620" width="6" height="2" fill="#bdc1c6" /><rect x="10" y="644" width="6" height="2" fill="#bdc1c6" /><rect x="10" y="668" width="6" height="2" fill="#bdc1c6" /><rect x="10" y="716" width="6" height="2" fill="#bdc1c6" /><rect x="10" y="740" width="6" height="2" fill="#bdc1c6" /><rect x="10" y="764" width="6" height="2" fill="#bdc1c6" /><rect x="6" y="788" width="14" height="2" fill="#bdc1c6" /><rect x="10" y="812" width="6" height="2" fill="#bdc1c6" /><rect x="10" y="836" width="6" height="2" fill="#bdc1c6" /><rect x="10" y="860" width="6" height="2" fill="#bdc1c6" /><rect x="10" y="908" width="6" height="2" fill="#bdc1c6" /><rect x="10" y="932" width="6" height="2" fill="#bdc1c6" /><rect x="10" y="956" width="6" height="2" fill="#bdc1c6" /><rect x="6" y="980" width="14" height="2" fill="#bdc1c6" /><rect x="10" y="1004" width="6" height="2" fill="#bdc1c6" /><rect x="10" y="1028" width="6" height="2" fill="#bdc1c6" /><rect x="10" y="1052" width="6" height="2" fill="#bdc1c6" /><rect x="10" y="1100" width="6" height="2" fill="#bdc1c6" /><rect x="10" y="1124" width="6" height="2" fill="#bdc1c6" /><rect x="10" y="1148" width="6" height="2" fill="#bdc1c6" /><rect x="6" y="1172" width="14" height="2" fill="#bdc1c6" /><rect x="10" y="1196" width="6" height="2" fill="#bdc1c6" /><rect x="10" y="1220" width="6" height="2" fill="#bdc1c6" /><rect x="10" y="1244" width="6" height="2" fill="#bdc1c6" /><rect x="10" y="1292" width="6" height="2" fill="#bdc1c6" /><rect x="10" y="1316" width="6" height="2" fill="#bdc1c6" /><rect x="10" y="1340" width="6" height="2" fill="#bdc1c6" /><rect x="6" y="1364" width="14" height="2" fill="#bdc1c6" /><rect x="10" y="1388" width="6" height="2" fill="#bdc1c6" /><rect x="10" y="1412" width="6" height="2" fill="#bdc1c6" /><rect x="10" y="1436" width="6" height="2" fill="#bdc1c6" /><rect x="10" y="1484" width="6" height="2" fill="#bdc1c6" /><rect x="10" y="1508" width="6" height="2" fill="#bdc1c6" /><rect x="70" y="298" width="32" height="32" rx="3" fill="none" stroke="#a5a7aa" stroke-width="4"/><rect x="76" y="304" width="4" height="4" fill="#a5a7aa" /><rect x="82" y="304" width="14" height="4" fill="#a5a7aa" /><rect x="76" y="312" width="4" height="4" fill="#a5a7aa" /><rect x="82" y="312" width="14" height="4" fill="#a5a7aa" /><rect x="76" y="320" width="4" height="4" fill="#a5a7aa" /><rect x="82" y="320" width="14" height="4" fill="#a5a7aa" /><path d="M1942 720h28a2 2 0 0 1 2 2v32l-7-6.200h-23a2 2 0 0 1-2-2v-23.800a2 2 0 0 1 2-2z" fill="#808080" /><rect x="1948" y="732" width="16" height="4" fill="#fff" /><rect x="1954" y="726" width="4" height="16" fill="#fff" /><path d="M0 1520.500Q1 1530 9.500 1530H0z" fill="#8b845c" />
<path transform="translate(421.04 23.26) scale(1.5800 1.5684)" fill="#5f6368" stroke="#5f6368" stroke-width="0.3" d="M22 9.24l-7.19-.62L12 2 9.19 8.63 2 9.24l5.46 4.73L5.82 21 12 17.27 18.18 21l-1.63-7.03L22 9.24zM12 15.4l-3.76 2.27 1-4.28-3.32-2.88 4.38-.38L12 6.1l1.71 4.04 4.38.38-3.32 2.88 1 4.28L12 15.4z"/>
<path transform="translate(480.90 24.02) scale(1.5000 1.4937)" fill="#5f6368" d="M20 6h-8l-2-2H4c-1.1 0-2 .9-2 2v12c0 1.1.9 2 2 2h16c1.1 0 2-.9 2-2V8c0-1.1-.9-2-2-2zm0 12H4V8h16v10zM8 12h4.17l-1.59-1.59L12 9l4 4-4 4-1.41-1.41L12.17 14H8z"/>
<path transform="translate(544.00 25.65) scale(1.3292 1.4125)" fill="#5f6368" stroke="#5f6368" stroke-width="0.3" d="M19.35 10.04C18.67 6.59 15.64 4 12 4 9.11 4 6.6 5.64 5.35 8.04 2.34 8.36 0 10.91 0 14c0 3.31 2.69 6 6 6h13c2.76 0 5-2.24 5-5 0-2.64-2.05-4.78-4.65-4.96zM19 18H6c-2.21 0-4-1.79-4-4 0-2.05 1.53-3.76 3.56-3.97l1.07-.11.5-.95C8.08 7.14 9.94 6 12 6c2.62 0 4.88 1.86 5.39 4.43l.3 1.5 1.53.11c1.56.1 2.78 1.41 2.78 2.96 0 1.65-1.35 3-3 3z"/>
<path transform="translate(52.88 147.13) scale(1.5584 1.5667)" fill="#5f6368" d="M12.5 8c-2.65 0-5.05.99-6.9 2.6L2 7v9h9l-3.62-3.62c1.39-1.16 3.16-1.88 5.12-1.88 3.54 0 6.55 2.31 7.6 5.5l2.37-.78C21.08 11.03 17.15 8 12.5 8z"/>
<path transform="translate(109.47 147.13) scale(1.5787 1.5667)" fill="#5f6368" d="M18.4 10.6C16.55 8.99 14.15 8 11.5 8c-4.65 0-8.58 3.03-9.96 7.22L3.9 16c1.05-3.19 4.05-5.5 7.6-5.5 1.95 0 3.73.72 5.12 1.88L13 16h9V7l-3.6 3.6z"/>
<path transform="translate(222.41 147.30) scale(1.4995 1.5333)" fill="#5f6368" d="M12.45 16h2.09L9.43 3H7.57L2.46 16h2.09l1.12-3h5.64l1.14 3zm-6.02-5L8.5 5.48 10.57 11H6.43zm15.16.59l-8.09 8.09L9.83 16l-1.41 1.41 5.09 5.09L23 13l-1.41-1.41z"/>
<path transform="translate(1131.63 147.14) scale(1.7674 1.7143)" fill="#5f6368" d="M15.6 10.79c.97-.67 1.65-1.77 1.65-2.79 0-2.26-1.75-4-4-4H7v14h7.04c2.09 0 3.71-1.7 3.71-3.79 0-1.52-.86-2.82-2.15-3.42zM10.4 6.5h2.600c.83 0 1.5.67 1.5 1.5s-.67 1.5-1.5 1.5h-2.600v-3zm3.100 9H10.4v-3h3.100c.83 0 1.5.67 1.5 1.5s-.67 1.500-1.5 1.500z"/>
</svg>
</body></html>
